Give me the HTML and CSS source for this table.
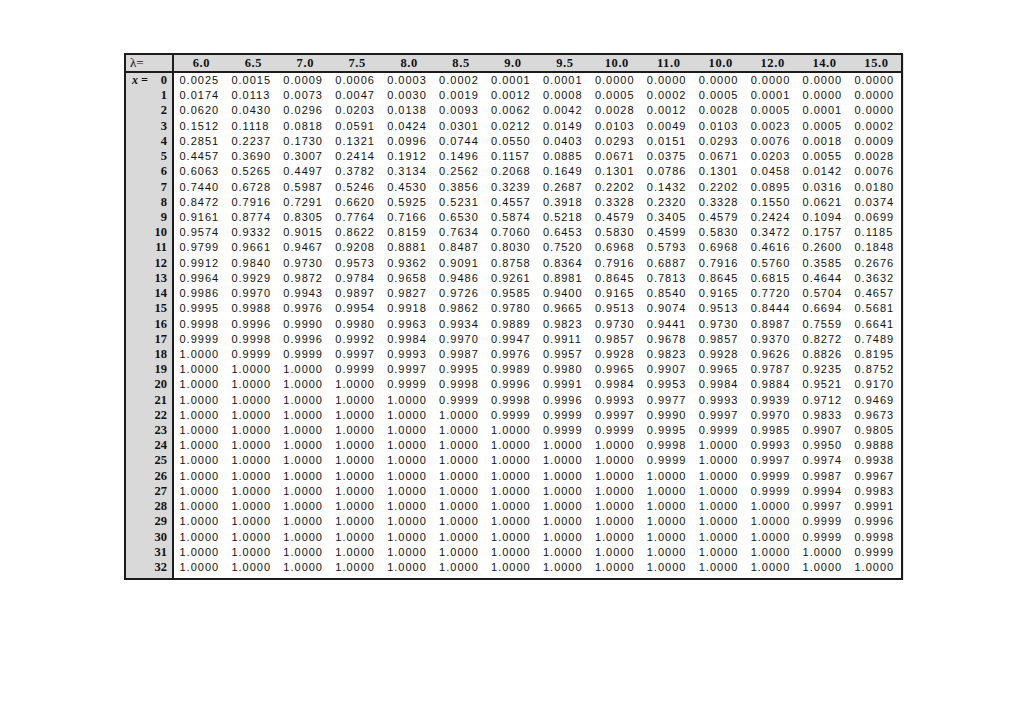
FILE: index.html
```html
<!DOCTYPE html>
<html>
<head>
<meta charset="utf-8">
<link rel="stylesheet" href="styles.css">
</head>
<body>
<div class="sheet">
<table class="poisson">
<colgroup><col class="c-label"><col span="14"></colgroup>
<thead>
<tr><th class="corner">λ=</th><th>6.0</th><th>6.5</th><th>7.0</th><th>7.5</th><th>8.0</th><th>8.5</th><th>9.0</th><th>9.5</th><th>10.0</th><th>11.0</th><th>10.0</th><th>12.0</th><th>14.0</th><th>15.0</th></tr>
</thead>
<tbody>
<tr><th><span class="xeq">x =</span>0</th><td>0.0025</td><td>0.0015</td><td>0.0009</td><td>0.0006</td><td>0.0003</td><td>0.0002</td><td>0.0001</td><td>0.0001</td><td>0.0000</td><td>0.0000</td><td>0.0000</td><td>0.0000</td><td>0.0000</td><td>0.0000</td></tr>
<tr><th>1</th><td>0.0174</td><td>0.0113</td><td>0.0073</td><td>0.0047</td><td>0.0030</td><td>0.0019</td><td>0.0012</td><td>0.0008</td><td>0.0005</td><td>0.0002</td><td>0.0005</td><td>0.0001</td><td>0.0000</td><td>0.0000</td></tr>
<tr><th>2</th><td>0.0620</td><td>0.0430</td><td>0.0296</td><td>0.0203</td><td>0.0138</td><td>0.0093</td><td>0.0062</td><td>0.0042</td><td>0.0028</td><td>0.0012</td><td>0.0028</td><td>0.0005</td><td>0.0001</td><td>0.0000</td></tr>
<tr><th>3</th><td>0.1512</td><td>0.1118</td><td>0.0818</td><td>0.0591</td><td>0.0424</td><td>0.0301</td><td>0.0212</td><td>0.0149</td><td>0.0103</td><td>0.0049</td><td>0.0103</td><td>0.0023</td><td>0.0005</td><td>0.0002</td></tr>
<tr><th>4</th><td>0.2851</td><td>0.2237</td><td>0.1730</td><td>0.1321</td><td>0.0996</td><td>0.0744</td><td>0.0550</td><td>0.0403</td><td>0.0293</td><td>0.0151</td><td>0.0293</td><td>0.0076</td><td>0.0018</td><td>0.0009</td></tr>
<tr><th>5</th><td>0.4457</td><td>0.3690</td><td>0.3007</td><td>0.2414</td><td>0.1912</td><td>0.1496</td><td>0.1157</td><td>0.0885</td><td>0.0671</td><td>0.0375</td><td>0.0671</td><td>0.0203</td><td>0.0055</td><td>0.0028</td></tr>
<tr><th>6</th><td>0.6063</td><td>0.5265</td><td>0.4497</td><td>0.3782</td><td>0.3134</td><td>0.2562</td><td>0.2068</td><td>0.1649</td><td>0.1301</td><td>0.0786</td><td>0.1301</td><td>0.0458</td><td>0.0142</td><td>0.0076</td></tr>
<tr><th>7</th><td>0.7440</td><td>0.6728</td><td>0.5987</td><td>0.5246</td><td>0.4530</td><td>0.3856</td><td>0.3239</td><td>0.2687</td><td>0.2202</td><td>0.1432</td><td>0.2202</td><td>0.0895</td><td>0.0316</td><td>0.0180</td></tr>
<tr><th>8</th><td>0.8472</td><td>0.7916</td><td>0.7291</td><td>0.6620</td><td>0.5925</td><td>0.5231</td><td>0.4557</td><td>0.3918</td><td>0.3328</td><td>0.2320</td><td>0.3328</td><td>0.1550</td><td>0.0621</td><td>0.0374</td></tr>
<tr><th>9</th><td>0.9161</td><td>0.8774</td><td>0.8305</td><td>0.7764</td><td>0.7166</td><td>0.6530</td><td>0.5874</td><td>0.5218</td><td>0.4579</td><td>0.3405</td><td>0.4579</td><td>0.2424</td><td>0.1094</td><td>0.0699</td></tr>
<tr><th>10</th><td>0.9574</td><td>0.9332</td><td>0.9015</td><td>0.8622</td><td>0.8159</td><td>0.7634</td><td>0.7060</td><td>0.6453</td><td>0.5830</td><td>0.4599</td><td>0.5830</td><td>0.3472</td><td>0.1757</td><td>0.1185</td></tr>
<tr><th>11</th><td>0.9799</td><td>0.9661</td><td>0.9467</td><td>0.9208</td><td>0.8881</td><td>0.8487</td><td>0.8030</td><td>0.7520</td><td>0.6968</td><td>0.5793</td><td>0.6968</td><td>0.4616</td><td>0.2600</td><td>0.1848</td></tr>
<tr><th>12</th><td>0.9912</td><td>0.9840</td><td>0.9730</td><td>0.9573</td><td>0.9362</td><td>0.9091</td><td>0.8758</td><td>0.8364</td><td>0.7916</td><td>0.6887</td><td>0.7916</td><td>0.5760</td><td>0.3585</td><td>0.2676</td></tr>
<tr><th>13</th><td>0.9964</td><td>0.9929</td><td>0.9872</td><td>0.9784</td><td>0.9658</td><td>0.9486</td><td>0.9261</td><td>0.8981</td><td>0.8645</td><td>0.7813</td><td>0.8645</td><td>0.6815</td><td>0.4644</td><td>0.3632</td></tr>
<tr><th>14</th><td>0.9986</td><td>0.9970</td><td>0.9943</td><td>0.9897</td><td>0.9827</td><td>0.9726</td><td>0.9585</td><td>0.9400</td><td>0.9165</td><td>0.8540</td><td>0.9165</td><td>0.7720</td><td>0.5704</td><td>0.4657</td></tr>
<tr><th>15</th><td>0.9995</td><td>0.9988</td><td>0.9976</td><td>0.9954</td><td>0.9918</td><td>0.9862</td><td>0.9780</td><td>0.9665</td><td>0.9513</td><td>0.9074</td><td>0.9513</td><td>0.8444</td><td>0.6694</td><td>0.5681</td></tr>
<tr><th>16</th><td>0.9998</td><td>0.9996</td><td>0.9990</td><td>0.9980</td><td>0.9963</td><td>0.9934</td><td>0.9889</td><td>0.9823</td><td>0.9730</td><td>0.9441</td><td>0.9730</td><td>0.8987</td><td>0.7559</td><td>0.6641</td></tr>
<tr><th>17</th><td>0.9999</td><td>0.9998</td><td>0.9996</td><td>0.9992</td><td>0.9984</td><td>0.9970</td><td>0.9947</td><td>0.9911</td><td>0.9857</td><td>0.9678</td><td>0.9857</td><td>0.9370</td><td>0.8272</td><td>0.7489</td></tr>
<tr><th>18</th><td>1.0000</td><td>0.9999</td><td>0.9999</td><td>0.9997</td><td>0.9993</td><td>0.9987</td><td>0.9976</td><td>0.9957</td><td>0.9928</td><td>0.9823</td><td>0.9928</td><td>0.9626</td><td>0.8826</td><td>0.8195</td></tr>
<tr><th>19</th><td>1.0000</td><td>1.0000</td><td>1.0000</td><td>0.9999</td><td>0.9997</td><td>0.9995</td><td>0.9989</td><td>0.9980</td><td>0.9965</td><td>0.9907</td><td>0.9965</td><td>0.9787</td><td>0.9235</td><td>0.8752</td></tr>
<tr><th>20</th><td>1.0000</td><td>1.0000</td><td>1.0000</td><td>1.0000</td><td>0.9999</td><td>0.9998</td><td>0.9996</td><td>0.9991</td><td>0.9984</td><td>0.9953</td><td>0.9984</td><td>0.9884</td><td>0.9521</td><td>0.9170</td></tr>
<tr><th>21</th><td>1.0000</td><td>1.0000</td><td>1.0000</td><td>1.0000</td><td>1.0000</td><td>0.9999</td><td>0.9998</td><td>0.9996</td><td>0.9993</td><td>0.9977</td><td>0.9993</td><td>0.9939</td><td>0.9712</td><td>0.9469</td></tr>
<tr><th>22</th><td>1.0000</td><td>1.0000</td><td>1.0000</td><td>1.0000</td><td>1.0000</td><td>1.0000</td><td>0.9999</td><td>0.9999</td><td>0.9997</td><td>0.9990</td><td>0.9997</td><td>0.9970</td><td>0.9833</td><td>0.9673</td></tr>
<tr><th>23</th><td>1.0000</td><td>1.0000</td><td>1.0000</td><td>1.0000</td><td>1.0000</td><td>1.0000</td><td>1.0000</td><td>0.9999</td><td>0.9999</td><td>0.9995</td><td>0.9999</td><td>0.9985</td><td>0.9907</td><td>0.9805</td></tr>
<tr><th>24</th><td>1.0000</td><td>1.0000</td><td>1.0000</td><td>1.0000</td><td>1.0000</td><td>1.0000</td><td>1.0000</td><td>1.0000</td><td>1.0000</td><td>0.9998</td><td>1.0000</td><td>0.9993</td><td>0.9950</td><td>0.9888</td></tr>
<tr><th>25</th><td>1.0000</td><td>1.0000</td><td>1.0000</td><td>1.0000</td><td>1.0000</td><td>1.0000</td><td>1.0000</td><td>1.0000</td><td>1.0000</td><td>0.9999</td><td>1.0000</td><td>0.9997</td><td>0.9974</td><td>0.9938</td></tr>
<tr><th>26</th><td>1.0000</td><td>1.0000</td><td>1.0000</td><td>1.0000</td><td>1.0000</td><td>1.0000</td><td>1.0000</td><td>1.0000</td><td>1.0000</td><td>1.0000</td><td>1.0000</td><td>0.9999</td><td>0.9987</td><td>0.9967</td></tr>
<tr><th>27</th><td>1.0000</td><td>1.0000</td><td>1.0000</td><td>1.0000</td><td>1.0000</td><td>1.0000</td><td>1.0000</td><td>1.0000</td><td>1.0000</td><td>1.0000</td><td>1.0000</td><td>0.9999</td><td>0.9994</td><td>0.9983</td></tr>
<tr><th>28</th><td>1.0000</td><td>1.0000</td><td>1.0000</td><td>1.0000</td><td>1.0000</td><td>1.0000</td><td>1.0000</td><td>1.0000</td><td>1.0000</td><td>1.0000</td><td>1.0000</td><td>1.0000</td><td>0.9997</td><td>0.9991</td></tr>
<tr><th>29</th><td>1.0000</td><td>1.0000</td><td>1.0000</td><td>1.0000</td><td>1.0000</td><td>1.0000</td><td>1.0000</td><td>1.0000</td><td>1.0000</td><td>1.0000</td><td>1.0000</td><td>1.0000</td><td>0.9999</td><td>0.9996</td></tr>
<tr><th>30</th><td>1.0000</td><td>1.0000</td><td>1.0000</td><td>1.0000</td><td>1.0000</td><td>1.0000</td><td>1.0000</td><td>1.0000</td><td>1.0000</td><td>1.0000</td><td>1.0000</td><td>1.0000</td><td>0.9999</td><td>0.9998</td></tr>
<tr><th>31</th><td>1.0000</td><td>1.0000</td><td>1.0000</td><td>1.0000</td><td>1.0000</td><td>1.0000</td><td>1.0000</td><td>1.0000</td><td>1.0000</td><td>1.0000</td><td>1.0000</td><td>1.0000</td><td>1.0000</td><td>0.9999</td></tr>
<tr><th>32</th><td>1.0000</td><td>1.0000</td><td>1.0000</td><td>1.0000</td><td>1.0000</td><td>1.0000</td><td>1.0000</td><td>1.0000</td><td>1.0000</td><td>1.0000</td><td>1.0000</td><td>1.0000</td><td>1.0000</td><td>1.0000</td></tr>
</tbody>
</table>
</div>
</body>
</html>
```
FILE: styles.css
```css
html, body {
  margin: 0;
  padding: 0;
  background: #ffffff;
}

.sheet {
  margin: 53px 0 0 124px;
  width: 779px;
  box-sizing: border-box;
  border: 2px solid #1c1c1c;
  box-shadow: 1px 1px 0 #e4e4e4;
}

.poisson {
  width: 775px;
  table-layout: fixed;
  border-collapse: separate;
  border-spacing: 0;
  color: #111111;
}

.c-label {
  width: 48px;
}

.poisson thead th {
  height: 16px;
  padding: 0 0 0 3px;
  background: #d9d9d9;
  border-bottom: 2px solid #1c1c1c;
  font-family: "Liberation Serif", "DejaVu Serif", serif;
  font-weight: bold;
  font-size: 12.5px;
  letter-spacing: 0.6px;
  line-height: 16px;
  text-align: center;
  white-space: nowrap;
}

.poisson thead th.corner {
  text-align: left;
  padding-left: 4px;
  font-weight: normal;
  font-size: 13px;
  letter-spacing: 0;
  border-right: 2px solid #1c1c1c;
}

.poisson tbody th {
  height: 15.22px;
  padding: 0 5px 0 0;
  background: #d9d9d9;
  border-right: 2px solid #1c1c1c;
  font-family: "Liberation Serif", "DejaVu Serif", serif;
  font-weight: bold;
  font-size: 12.5px;
  line-height: 15.22px;
  text-align: right;
  white-space: nowrap;
}

.xeq {
  float: left;
  padding-left: 6px;
  font-style: italic;
  font-weight: bold;
  font-size: 12px;
}

.poisson tbody td {
  height: 15.22px;
  padding: 0 0 0 5.5px;
  font-family: "Liberation Sans", Arial, sans-serif;
  font-size: 11px;
  letter-spacing: 1px;
  line-height: 15.22px;
  text-align: left;
  white-space: nowrap;
}

.poisson tbody tr:last-child th,
.poisson tbody tr:last-child td {
  padding-bottom: 3px;
}
```
